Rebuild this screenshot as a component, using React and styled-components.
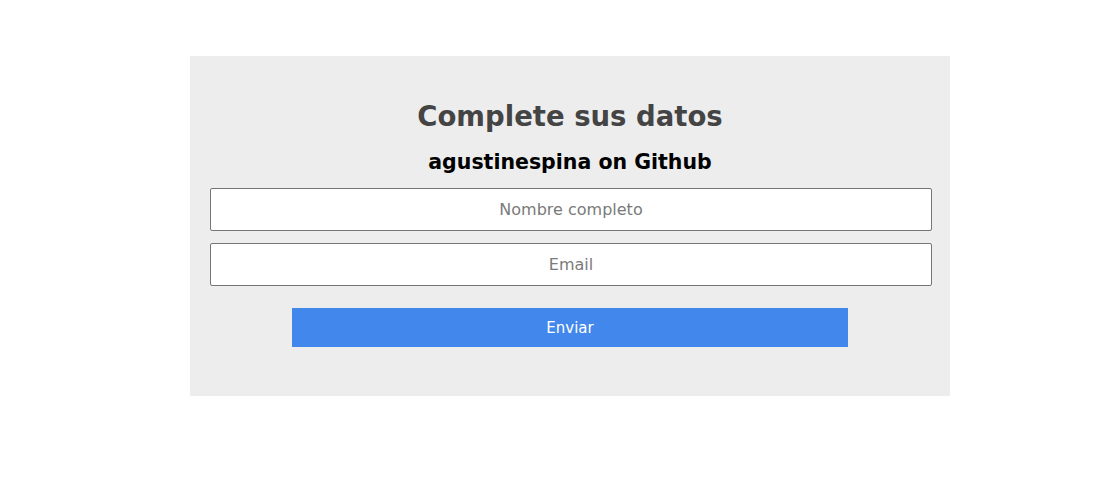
import React from 'react'
import styled, { createGlobalStyle } from 'styled-components'

const GlobalStyle = createGlobalStyle`
  body {
    margin: 0;
    background: #ffffff;
    font-family: "DejaVu Sans", "Liberation Sans", sans-serif;
  }
`

const Page = styled.div`
  display: flex;
  justify-content: center;
  padding: 56px 0 0 32px;
`

const Card = styled.form`
  width: 760px;
  height: 340px;
  box-sizing: border-box;
  background: #ededed;
  display: flex;
  flex-direction: column;
  align-items: center;
  padding-top: 40px;
`

const Title = styled.h1`
  margin: 0;
  font-size: 27.5px;
  font-weight: bold;
  color: #444444;
  line-height: 40px;
`

const Subtitle = styled.h2`
  margin: 12px 0 12px 0;
  font-size: 20.5px;
  font-weight: bold;
  color: #000000;
  line-height: 28px;
`

const Input = styled.input`
  width: 722px;
  height: 43px;
  box-sizing: border-box;
  margin: 0 0 12px 2px;
  border: 1px solid #767676;
  border-radius: 2px;
  background: #fff;
  text-align: center;
  font-family: "DejaVu Sans", "Liberation Sans", sans-serif;
  font-size: 16px;

  &::placeholder {
    color: #7a7a7a;
  }
`

const Button = styled.button`
  margin-top: 10px;
  width: 556px;
  height: 39px;
  border: none;
  background: #4287ec;
  color: #ffffff;
  font-family: "DejaVu Sans", "Liberation Sans", sans-serif;
  font-size: 15px;
`

export default function App() {
  return (
    <>
      <GlobalStyle />
      <Page>
        <Card onSubmit={(e) => e.preventDefault()}>
          <Title>Complete sus datos</Title>
          <Subtitle>agustinespina on Github</Subtitle>
          <Input type="text" placeholder="Nombre completo" />
          <Input type="email" placeholder="Email" />
          <Button type="submit">Enviar</Button>
        </Card>
      </Page>
    </>
  )
}
